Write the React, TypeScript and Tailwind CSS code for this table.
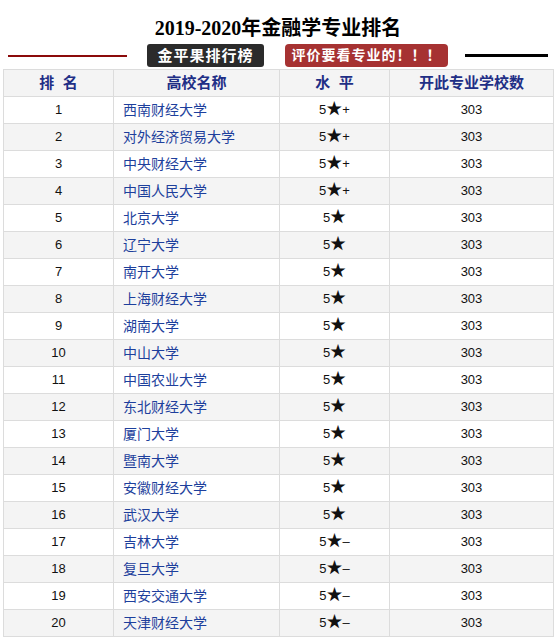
const schools = [
  ["西南财经大学", "+"],
  ["对外经济贸易大学", "+"],
  ["中央财经大学", "+"],
  ["中国人民大学", "+"],
  ["北京大学", ""],
  ["辽宁大学", ""],
  ["南开大学", ""],
  ["上海财经大学", ""],
  ["湖南大学", ""],
  ["中山大学", ""],
  ["中国农业大学", ""],
  ["东北财经大学", ""],
  ["厦门大学", ""],
  ["暨南大学", ""],
  ["安徽财经大学", ""],
  ["武汉大学", ""],
  ["吉林大学", "–"],
  ["复旦大学", "–"],
  ["西安交通大学", "–"],
  ["天津财经大学", "–"],
];

const font = { fontFamily: '"Liberation Sans", "Noto Sans CJK SC", sans-serif' };

export default function App() {
  return (
    <div className="w-[556px] h-[641px] bg-white overflow-hidden" style={font}>
      <h1
        className="pt-[14px] h-[43px] text-center text-[20px] leading-[28px] font-semibold text-black"
        style={{ fontFamily: '"Liberation Serif", "Noto Sans CJK SC", serif' }}
      >
        2019-2020年金融学专业排名
      </h1>

      <div className="flex items-center h-[25px]">
        <div className="ml-[8px] w-[119px] h-[2px] bg-[#8b0a0a]" />
        <div className="ml-[20px] w-[117px] h-[23px] rounded-[3px] bg-[#2b2b2b] text-white text-[15px] font-bold leading-[23px] text-center tracking-[1px]">
          金平果排行榜
        </div>
        <div className="ml-[21px] w-[163px] h-[23px] rounded-[4px] bg-[#a63232] text-white text-[14px] font-bold leading-[23px] text-center tracking-[1px]">
          评价要看专业的！！！
        </div>
        <div className="ml-[17px] w-[83px] h-[3px] bg-black" />
      </div>

      <table className="ml-[3px] mt-[1px] w-[550px] border-collapse table-fixed text-[13px]">
        <colgroup>
          <col className="w-[110px]" />
          <col className="w-[166px]" />
          <col className="w-[110px]" />
          <col className="w-[164px]" />
        </colgroup>
        <thead>
          <tr className="h-[27px] bg-[#f4f4f4] text-[#1f2f86] text-[15px] font-bold">
            <th className="border border-[#dcdcdc] font-bold">排&nbsp;&nbsp;名</th>
            <th className="border border-[#dcdcdc] font-bold">高校名称</th>
            <th className="border border-[#dcdcdc] font-bold">水&nbsp;&nbsp;平</th>
            <th className="border border-[#dcdcdc] font-bold">开此专业学校数</th>
          </tr>
        </thead>
        <tbody>
          {schools.map(([name, mark], i) => (
            <tr key={name} className={i % 2 === 0 ? "h-[27px] bg-white" : "h-[27px] bg-[#f4f4f4]"}>
              <td className="border border-[#dcdcdc] text-center text-[#111]">{i + 1}</td>
              <td className="border border-[#dcdcdc] pl-[9px] text-[#1d3f9c] text-[14px]">{name}</td>
              <td className="border border-[#dcdcdc] text-center text-[#111]">
                5<span className="text-[16px] leading-none">★</span>
                {mark}
              </td>
              <td className="border border-[#dcdcdc] text-center text-[#111]">303</td>
            </tr>
          ))}
        </tbody>
      </table>
    </div>
  );
}
